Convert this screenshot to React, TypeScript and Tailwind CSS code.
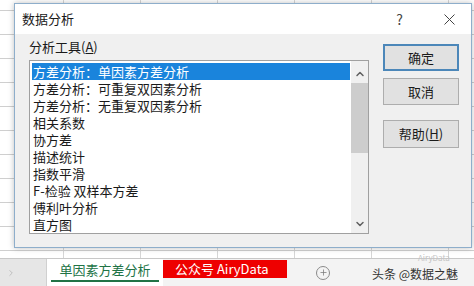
import { ChevronUp, ChevronDown, ChevronRight, Plus } from "lucide-react";

const tools = [
  "方差分析：单因素方差分析",
  "方差分析：可重复双因素分析",
  "方差分析：无重复双因素分析",
  "相关系数",
  "协方差",
  "描述统计",
  "指数平滑",
  "F-检验 双样本方差",
  "傅利叶分析",
  "直方图",
];

const App = () => {
  return (
    <div className="w-[474px] h-[286px] flex flex-col overflow-hidden bg-white text-[#1a1a1a] font-['Noto_Sans_CJK_SC',sans-serif]">
      {/* sheet behind the dialog */}
      <div className="h-[258px] pl-[14px] pt-[3px] bg-white bg-[linear-gradient(#cfcfcf_1px,transparent_1px),linear-gradient(90deg,#d6d6d6_1px,transparent_1px)] bg-size-[77px_24px] bg-position-[63px_10px]">
        <div className="w-[458px] h-[245px] flex flex-col border border-[#8eaecb] bg-[#f0f0f0] shadow-[0_0_6px_rgba(0,0,0,0.25)]">
          <div className="h-[30px] bg-white flex items-center pl-[7px] pr-[16px] shrink-0">
            <span className="text-[13px]">数据分析</span>
            <span className="ml-auto text-[14px] text-[#444] mr-[41px]">?</span>
            <svg width="11" height="11" viewBox="0 0 11 11" className="text-[#444]">
              <path d="M0.5 0.5 L10.5 10.5 M10.5 0.5 L0.5 10.5" stroke="currentColor" strokeWidth="1" />
            </svg>
          </div>
          <div className="flex flex-row flex-1">
            <div className="pl-[14px] pt-[3px]">
              <div className="text-[13px] leading-[20px]">
                分析工具(<span className="underline">A</span>)
              </div>
              <div className="mt-[3px] w-[340px] h-[174px] border border-[#a0a0a0] bg-white flex flex-row">
                <div className="flex-1 pt-[2px] pl-[2px]">
                  {tools.map((t, i) => (
                    <div
                      key={t}
                      className={
                        i === 0
                          ? "h-[17px] leading-[17px] pl-[1px] text-[13px] bg-[#1a84dc] text-white mr-[1px]"
                          : "h-[17px] leading-[17px] pl-[1px] text-[13px]"
                      }
                    >
                      {t}
                    </div>
                  ))}
                </div>
                <div className="w-[17px] bg-[#f0f0f0] flex flex-col items-center">
                  <div className="h-[19px] w-full flex items-end justify-center text-[#606060]">
                    <ChevronUp size={12} strokeWidth={3} />
                  </div>
                  <div className="mt-[3px] h-[70px] w-full bg-[#cdcdcd]" />
                  <div className="mt-auto h-[18px] w-full flex items-center justify-center text-[#606060]">
                    <ChevronDown size={12} strokeWidth={3} />
                  </div>
                </div>
              </div>
            </div>
            <div className="ml-[14px] pt-[10px] flex flex-col w-[76px]">
              <button className="h-[27px] bg-[#e1e1e1] border-2 border-[#4c87b9] text-[13px]">确定</button>
              <button className="mt-[7px] h-[27px] bg-[#e1e1e1] border border-[#adadad] text-[13px]">取消</button>
              <button className="mt-[15px] h-[28px] bg-[#e1e1e1] border border-[#adadad] text-[13px]">
                帮助(<span className="underline">H</span>)
              </button>
            </div>
          </div>
        </div>
      </div>

      {/* sheet tabs */}
      <div className="h-[28px] flex flex-row border-t border-[#c8c8c8] bg-[#f3f3f3] relative">
        <div className="w-[47px] bg-[#e6e6e6] flex items-center pl-[6px] text-[#b8b8b8] border-r border-[#d0d0d0]">
          <ChevronRight size={10} />
        </div>
        <div className="w-[116px] bg-white flex flex-col items-center">
          <div className="h-[20px] leading-[20px] text-[13px] text-[#217346] mt-[1px]">单因素方差分析</div>
          <div className="w-[108px] h-[2px] bg-[#217346]" />
        </div>
        <div className="w-[124px] h-[18px] mt-[1px] bg-[#ee0000] text-white text-[13px] leading-[18px] pl-[12px]">
          公众号 AiryData
        </div>
        <div className="ml-[29px] flex items-center">
          <div className="w-[14px] h-[14px] rounded-full border border-[#8a8a8a] flex items-center justify-center text-[#7a7a7a]">
            <Plus size={9} strokeWidth={2} />
          </div>
        </div>
        <div className="ml-[42px] pt-[2px] flex items-center text-[12px] leading-none text-[#333]">头条 @数据之魅</div>
        <div className="absolute left-[418px] top-[-5px] text-[8px] leading-none text-[#c4c4c4]">AiryData</div>
      </div>
    </div>
  );
};

export default App;
